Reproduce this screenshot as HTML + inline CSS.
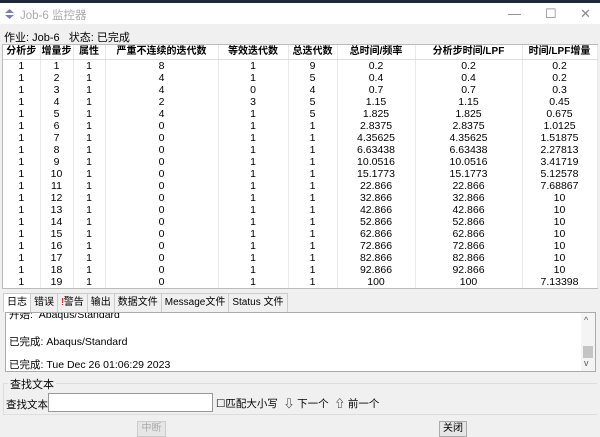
<!DOCTYPE html>
<html><head><meta charset="utf-8"><style>
*{margin:0;padding:0;box-sizing:border-box}
body{width:600px;height:437px;overflow:hidden;background:#f0f0f0;font-family:"Liberation Sans","Noto Sans CJK SC",sans-serif;font-size:11px;color:#000;position:relative}
.top{position:absolute;left:0;top:0;width:600px;height:3px;background:#1e2a3a}
.title{position:absolute;left:0;top:3px;width:600px;height:21px;background:#fff}
.title .t{position:absolute;left:20px;top:4px;color:#aaa;font-size:11.5px}
.title .ic{position:absolute;left:4px;top:6px;width:11px;height:10px}
.ctl{position:absolute;top:3px;color:#888;font-size:13px}
.status{position:absolute;left:4px;top:29px;font-size:11px}
table{position:absolute;left:3px;top:45px;width:594px;border-collapse:collapse;background:#fff;table-layout:fixed}
td,th{height:12px;line-height:12px;text-align:center;font-size:10.5px;border-right:1px solid #e8e8e8;padding:0;white-space:nowrap;overflow:hidden}
th{height:14px;font-weight:bold;border-bottom:1px solid #ddd;font-size:10px}
.tablebox{position:absolute;left:2px;top:44px;width:596px;height:245px;border:1px solid #bbb;background:#fff}
.tabs{position:absolute;left:3px;top:293px;height:19px;display:flex}
.tab{border:1px solid #ccc;border-bottom:none;padding:0 3px;line-height:17px;background:#f0f0f0;font-size:10px;margin-right:-1px;white-space:nowrap}
.tab.a{background:#fff}
.log{position:absolute;left:5px;top:312px;width:591px;height:60px;background:#fff;border:1px solid #aaa;font-size:10.5px;overflow:hidden}
.log .ln{position:absolute;left:3px;white-space:nowrap}
.sb{position:absolute;right:0;top:0;width:14px;height:58px;background:#f4f4f4}
.grp{position:absolute;left:3px;top:383px;width:594px;height:32px;border:1px solid #ddd;border-right:none}
.btn{position:absolute;top:421px;height:16px;border:1px solid #aaa;background:#e6e6e6;font-size:10px;text-align:center;line-height:14px}
</style></head><body>
<div class="top"></div>
<div class="title"><svg class="ic" viewBox="0 0 11 10"><path d="M5.5 0 L11 5 L5.5 10 L0 5Z" fill="#7a7fb0"/><rect x="0" y="4" width="11" height="2" fill="#fff"/></svg><span class="t">Job-6 监控器</span>
<span class="ctl" style="left:508px">—</span><span class="ctl" style="left:545px">☐</span><span class="ctl" style="left:580px">✕</span></div>
<div class="status">作业: Job-6 &nbsp; 状态: 已完成</div>
<div class="tablebox"></div>
<table>
<colgroup><col style="width:37px"><col style="width:33px"><col style="width:32px"><col style="width:113px"><col style="width:70px"><col style="width:49px"><col style="width:78px"><col style="width:107px"><col style="width:75px"></colgroup>
<tr><th>分析步</th><th>增量步</th><th>属性</th><th>严重不连续的迭代数</th><th>等效迭代数</th><th>总迭代数</th><th>总时间/频率</th><th>分析步时间/LPF</th><th>时间/LPF增量</th></tr>
<tr><td>1</td><td>1</td><td>1</td><td>8</td><td>1</td><td>9</td><td>0.2</td><td>0.2</td><td>0.2</td></tr>
<tr><td>1</td><td>2</td><td>1</td><td>4</td><td>1</td><td>5</td><td>0.4</td><td>0.4</td><td>0.2</td></tr>
<tr><td>1</td><td>3</td><td>1</td><td>4</td><td>0</td><td>4</td><td>0.7</td><td>0.7</td><td>0.3</td></tr>
<tr><td>1</td><td>4</td><td>1</td><td>2</td><td>3</td><td>5</td><td>1.15</td><td>1.15</td><td>0.45</td></tr>
<tr><td>1</td><td>5</td><td>1</td><td>4</td><td>1</td><td>5</td><td>1.825</td><td>1.825</td><td>0.675</td></tr>
<tr><td>1</td><td>6</td><td>1</td><td>0</td><td>1</td><td>1</td><td>2.8375</td><td>2.8375</td><td>1.0125</td></tr>
<tr><td>1</td><td>7</td><td>1</td><td>0</td><td>1</td><td>1</td><td>4.35625</td><td>4.35625</td><td>1.51875</td></tr>
<tr><td>1</td><td>8</td><td>1</td><td>0</td><td>1</td><td>1</td><td>6.63438</td><td>6.63438</td><td>2.27813</td></tr>
<tr><td>1</td><td>9</td><td>1</td><td>0</td><td>1</td><td>1</td><td>10.0516</td><td>10.0516</td><td>3.41719</td></tr>
<tr><td>1</td><td>10</td><td>1</td><td>0</td><td>1</td><td>1</td><td>15.1773</td><td>15.1773</td><td>5.12578</td></tr>
<tr><td>1</td><td>11</td><td>1</td><td>0</td><td>1</td><td>1</td><td>22.866</td><td>22.866</td><td>7.68867</td></tr>
<tr><td>1</td><td>12</td><td>1</td><td>0</td><td>1</td><td>1</td><td>32.866</td><td>32.866</td><td>10</td></tr>
<tr><td>1</td><td>13</td><td>1</td><td>0</td><td>1</td><td>1</td><td>42.866</td><td>42.866</td><td>10</td></tr>
<tr><td>1</td><td>14</td><td>1</td><td>0</td><td>1</td><td>1</td><td>52.866</td><td>52.866</td><td>10</td></tr>
<tr><td>1</td><td>15</td><td>1</td><td>0</td><td>1</td><td>1</td><td>62.866</td><td>62.866</td><td>10</td></tr>
<tr><td>1</td><td>16</td><td>1</td><td>0</td><td>1</td><td>1</td><td>72.866</td><td>72.866</td><td>10</td></tr>
<tr><td>1</td><td>17</td><td>1</td><td>0</td><td>1</td><td>1</td><td>82.866</td><td>82.866</td><td>10</td></tr>
<tr><td>1</td><td>18</td><td>1</td><td>0</td><td>1</td><td>1</td><td>92.866</td><td>92.866</td><td>10</td></tr>
<tr><td>1</td><td>19</td><td>1</td><td>0</td><td>1</td><td>1</td><td>100</td><td>100</td><td>7.13398</td></tr>
</table>
<div class="tabs"><div class="tab a">日志</div><div class="tab">错误</div><div class="tab"><span style="color:#e00">!</span>警告</div><div class="tab">输出</div><div class="tab">数据文件</div><div class="tab">Message文件</div><div class="tab">Status 文件</div></div>
<div class="log">
<div class="ln" style="top:-6px">开始: &nbsp;Abaqus/Standard</div>
<div class="ln" style="top:21px">已完成: Abaqus/Standard</div>
<div class="ln" style="top:44px">已完成: Tue Dec 26 01:06:29 2023</div>
<div class="sb"><span style="position:absolute;left:3px;top:2px;font-size:9px;color:#555">^</span><div style="position:absolute;left:2px;top:33px;width:10px;height:12px;background:#c4c4c4"></div><span style="position:absolute;left:3px;top:45px;font-size:9px;color:#555">v</span></div>
</div>
<div class="grp"></div>
<div style="position:absolute;left:8px;top:376px;background:#f0f0f0;padding:0 2px">查找文本</div>
<div style="position:absolute;left:6px;top:397px;white-space:nowrap;font-size:10.5px">查找文本:</div>
<div style="position:absolute;left:48px;top:393px;width:165px;height:19px;background:#fff;border:1px solid #999"></div>
<div style="position:absolute;left:216px;top:396px;white-space:nowrap;font-size:10.5px">☐匹配大小写 &nbsp;⇩ 下一个 &nbsp;⇧ 前一个</div>
<div class="btn" style="left:137px;width:29px;color:#aaa;border-color:#ccc">中断</div>
<div class="btn" style="left:439px;width:28px">关闭</div>
</body></html>
